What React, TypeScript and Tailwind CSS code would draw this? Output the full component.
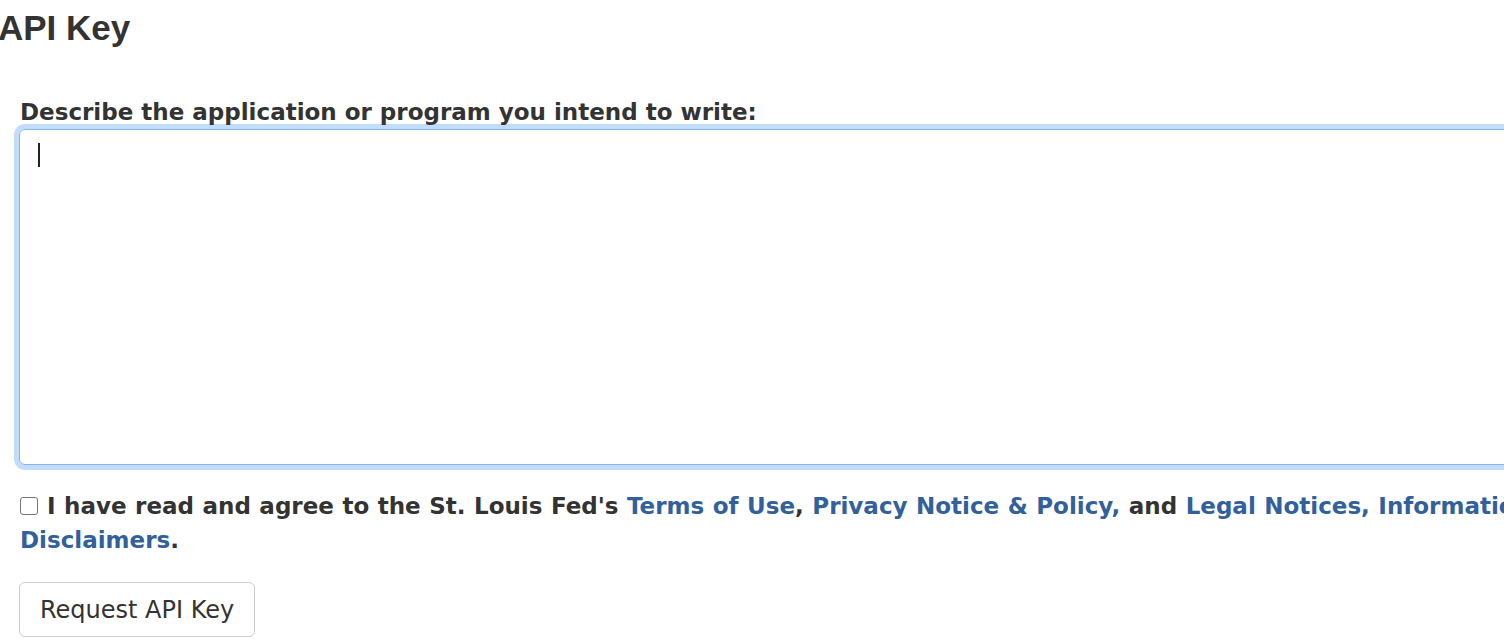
import React from 'react';

const linkClass = 'text-[#32609c]';

export default function App() {
  return (
    <div className="h-[642px] w-[1504px] overflow-hidden bg-white text-[#333]">
      <div className="w-[1660px]">
        {/* Heading */}
        <h1 className="ml-[-2px] pt-[8px] font-['Liberation_Sans',Arial,sans-serif] text-[35px] font-bold leading-[40px]">
          API Key
        </h1>

        <div className="mt-[50px] pl-[19px] font-['DejaVu_Sans',Verdana,sans-serif]">
          {/* Description */}
          <label className="block pl-[1px] text-[23px] font-bold leading-[28px]">
            Describe the application or program you intend to write:
          </label>
          <div className="mt-[3px] h-[336px] rounded-[6px] border border-[#86b4ef] px-[18px] py-[13px] shadow-[0_0_0_5px_#c2dcfb]">
            <span className="inline-block h-[24px] w-[2px] bg-[#222]" />
          </div>

          {/* Terms */}
          <p className="mt-[24px] pl-[1px] text-[23px] font-bold leading-[34px] [word-spacing:0.5px]">
            <span className="mr-[9px] inline-block h-[18px] w-[18px] rounded-[3px] border-[1.5px] border-[#767676] bg-white align-[-1px]" />
            I have read and agree to the St. Louis Fed's{' '}
            <span className={linkClass}>Terms of Use</span>,{' '}
            <span className={linkClass}>Privacy Notice &amp; Policy,</span> and{' '}
            <span className={linkClass}>Legal Notices, Information and Disclaimers</span>.
          </p>

          {/* Submit */}
          <button
            className="mt-[25px] h-[55px] rounded-[6px] border border-[#ccc] bg-white px-[20px] text-[24px] text-[#333]"
            type="button"
          >
            Request API Key
          </button>
        </div>
      </div>
    </div>
  );
}
